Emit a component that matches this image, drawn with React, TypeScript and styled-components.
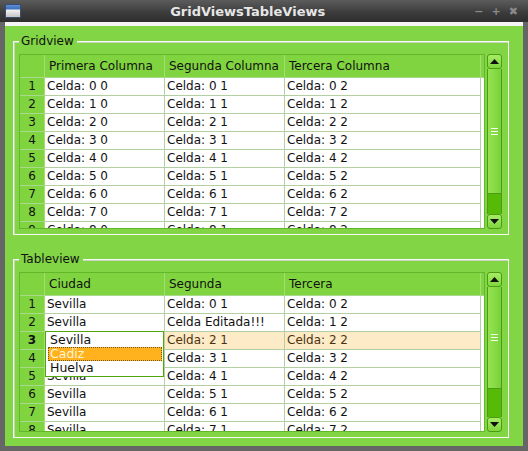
import styled, { createGlobalStyle } from "styled-components"

const GlobalStyle = createGlobalStyle`
  html, body {
    margin: 0;
    padding: 0;
    background: #666666;
  }
  * {
    box-sizing: border-box;
  }
`

type Cell = { text: string; editing?: boolean }

const gridHeaders = ["Primera Columna", "Segunda Columna", "Tercera Columna"]
const tableHeaders = ["Ciudad", "Segunda", "Tercera"]
const cities = ["Sevilla", "Cadiz", "Huelva"]

function App() {
  // la tabla de arriba: solo celdas numeradas
  const gridRows: Cell[][] = Array.from({ length: 9 }, (_, r) =>
    Array.from({ length: 3 }, (_, c) => ({ text: `Celda: ${r} ${c}` }))
  )

  // la de abajo: primera columna con la ciudad, fila 3 en edición
  const tableRows: Cell[][] = Array.from({ length: 8 }, (_, r) => [
    { text: "Sevilla", editing: r === 2 },
    { text: r === 1 ? "Celda Editada!!!" : `Celda: ${r} 1` },
    { text: `Celda: ${r} 2` },
  ])

  return (
    <>
      <GlobalStyle />
      <StWindow>
        <StTitleBar>
          <StAppIcon />
          <StTitle>GridViewsTableViews</StTitle>
          <StTitleButtons>
            <span>−</span>
            <span>+</span>
            <span>✖</span>
          </StTitleButtons>
        </StTitleBar>
        <StClient>
          <StGroup $height={194}>
            <StGroupTitle>Gridview</StGroupTitle>
            <StViewRow>
              <StTable>
                <StHeaderRow>
                  <StCorner />
                  {gridHeaders.map((h) => (
                    <StHeaderCell key={h}>{h}</StHeaderCell>
                  ))}
                  <StFiller />
                </StHeaderRow>
                {gridRows.map((row, r) => (
                  <StRow key={r}>
                    <StRowNumber>{r + 1}</StRowNumber>
                    {row.map((cell, c) => (
                      <StCell key={c}>{cell.text}</StCell>
                    ))}
                    <StFiller />
                  </StRow>
                ))}
              </StTable>
              <ScrollBar handle={124} trough={21} />
            </StViewRow>
          </StGroup>

          <StGroup $height={179}>
            <StGroupTitle>Tableview</StGroupTitle>
            <StViewRow>
              <StTable>
                <StHeaderRow>
                  <StCorner />
                  {tableHeaders.map((h) => (
                    <StHeaderCell key={h}>{h}</StHeaderCell>
                  ))}
                  <StFiller />
                </StHeaderRow>
                {tableRows.map((row, r) => {
                  const current = row[0].editing
                  return (
                    <StRow key={r}>
                      <StRowNumber $current={current}>{r + 1}</StRowNumber>
                      {row.map((cell, c) =>
                        cell.editing ? (
                          <StEditorCell key={c}>
                            <StComboPopup>
                              {cities.map((city) => (
                                <StComboItem key={city} $active={city === "Cadiz"}>
                                  {city}
                                </StComboItem>
                              ))}
                            </StComboPopup>
                          </StEditorCell>
                        ) : (
                          <StCell key={c} $current={current}>
                            {cell.text}
                          </StCell>
                        )
                      )}
                      <StFiller />
                    </StRow>
                  )
                })}
              </StTable>
              <ScrollBar handle={101} trough={29} />
            </StViewRow>
          </StGroup>
        </StClient>
      </StWindow>
    </>
  )
}

function ScrollBar({ handle, trough }: { handle: number; trough: number }) {
  return (
    <StScrollBar>
      <StArrowButton>
        <svg width="9" height="5" viewBox="0 0 9 5">
          <path d="M0 5 L4.5 0 L9 5 Z" fill="#111" />
        </svg>
      </StArrowButton>
      <StHandle style={{ height: handle }}>
        <StGrip />
      </StHandle>
      <StTrough style={{ height: trough }} />
      <StArrowButton>
        <svg width="9" height="5" viewBox="0 0 9 5">
          <path d="M0 0 L4.5 5 L9 0 Z" fill="#111" />
        </svg>
      </StArrowButton>
    </StScrollBar>
  )
}

export default App

const StWindow = styled.div`
  width: 528px;
  height: 451px;
  background: #666666;
  padding: 0 5px 5px 5px;
  display: flex;
  flex-direction: column;
  font-family: "DejaVu Sans", "Liberation Sans", sans-serif;
  font-size: 12px;
  color: #111;
`

const StTitleBar = styled.div`
  height: 22px;
  margin: 0 -5px;
  padding: 0 10px 0 5px;
  display: flex;
  align-items: center;
  background: linear-gradient(#5c5c5c, #3a3a3a 60%, #2e2e2e);
`

const StAppIcon = styled.div`
  width: 16px;
  height: 14px;
  border: 1px solid #3a4e70;
  background: linear-gradient(#5c8ed8 0, #3e70c0 4px, #f2f2f2 5px, #c4c4c4 100%);
`

const StTitle = styled.div`
  flex: 1;
  text-align: center;
  font-weight: bold;
  font-size: 13px;
  color: #e6e6e6;
`

const StTitleButtons = styled.div`
  display: flex;
  gap: 8px;
  color: #8a8a8a;
  font-size: 11px;
  font-weight: bold;
`

const StClient = styled.div`
  flex: 1;
  background: #82d545;
  border-top: 4px solid #f4f4f4;
  padding: 15px 14px 0 8px;
  display: flex;
  flex-direction: column;
  gap: 24px;
`

const StGroup = styled.div<{ $height: number }>`
  position: relative;
  height: ${(p) => p.$height}px;
  border: 1px solid #f8f8f8;
  box-shadow: inset 1px 1px 0 #c4d8b8;
  padding: 12px 6px 5px 5px;
  display: flex;
`

const StGroupTitle = styled.span`
  position: absolute;
  top: -8px;
  left: 5px;
  padding: 0 3px 0 2px;
  background: #82d545;
  line-height: 14px;
`

const StViewRow = styled.div`
  flex: 1;
  display: flex;
  gap: 2px;
`

const StTable = styled.div`
  width: 466px;
  border: 1px solid #62b82a;
  background: #ffffff;
  overflow: hidden;
  position: relative;
`

const columns = "25px 120px 120px 196px 1fr"

const StHeaderRow = styled.div`
  display: grid;
  grid-template-columns: ${columns};
  height: 23px;
  background: #80d440;
  border-bottom: 1px solid #a9d98c;
`

const StCorner = styled.div`
  border-right: 1px solid #a4dc78;
`

const StHeaderCell = styled.div`
  border-right: 1px solid #a4dc78;
  padding-left: 4px;
  line-height: 22px;
  white-space: nowrap;
  overflow: hidden;
`

const StFiller = styled.div``

const StRow = styled.div`
  display: grid;
  grid-template-columns: ${columns};
  height: 18px;
`

const StRowNumber = styled.div<{ $current?: boolean }>`
  background: #80d440;
  border-right: 1px solid #a4dc78;
  border-bottom: 1px solid #a9d98c;
  text-align: center;
  line-height: 17px;
  font-weight: ${(p) => (p.$current ? "bold" : "normal")};
`

const StCell = styled.div<{ $current?: boolean }>`
  background: ${(p) => (p.$current ? "#fdeac6" : "#ffffff")};
  color: ${(p) => (p.$current ? "#4a3410" : "#111")};
  border-right: 1px solid #b4cfa2;
  border-bottom: 1px solid #b4cfa2;
  padding-left: 2px;
  line-height: 17px;
  white-space: nowrap;
`

const StEditorCell = styled.div`
  position: relative;
  border-right: 1px solid #b4cfa2;
  border-bottom: 1px solid #b4cfa2;
`

const StComboPopup = styled.div`
  position: absolute;
  top: -1px;
  left: 0;
  width: 119px;
  height: 46px;
  background: #ffffff;
  border: 1px solid #4fa60e;
  padding: 1px 1px 0 2px;
  z-index: 2;
`

const StComboItem = styled.div<{ $active?: boolean }>`
  height: 14px;
  line-height: 14px;
  padding-left: 2px;
  font-size: 12.5px;
  background: ${(p) => (p.$active ? "#ffb21e" : "transparent")};
  color: ${(p) => (p.$active ? "#fff4d6" : "#111")};
  outline: ${(p) => (p.$active ? "1px dotted #6b5a10" : "none")};
  outline-offset: -1px;
`

const StScrollBar = styled.div`
  width: 15px;
  display: flex;
  flex-direction: column;
`

const StArrowButton = styled.div`
  height: 15px;
  border: 1px solid #4c9c12;
  border-radius: 3px;
  background: linear-gradient(#a6ec66, #80d63e);
  display: flex;
  align-items: center;
  justify-content: center;
`

const StHandle = styled.div`
  border: 1px solid #4c9c12;
  border-top: none;
  border-bottom: none;
  background: linear-gradient(90deg, #96e252, #84da44 60%, #78d03a);
  display: flex;
  align-items: center;
  justify-content: center;
`

const StGrip = styled.div`
  width: 7px;
  height: 7px;
  border-top: 1px solid #f4fff0;
  border-bottom: 1px solid #f4fff0;
  background: linear-gradient(transparent 2px, #f4fff0 2px, #f4fff0 3px, transparent 3px);
`

const StTrough = styled.div`
  border: 1px solid #4c9c12;
  border-top: 1px solid #4c9c12;
  border-bottom: none;
  background: #58ba08;
`
